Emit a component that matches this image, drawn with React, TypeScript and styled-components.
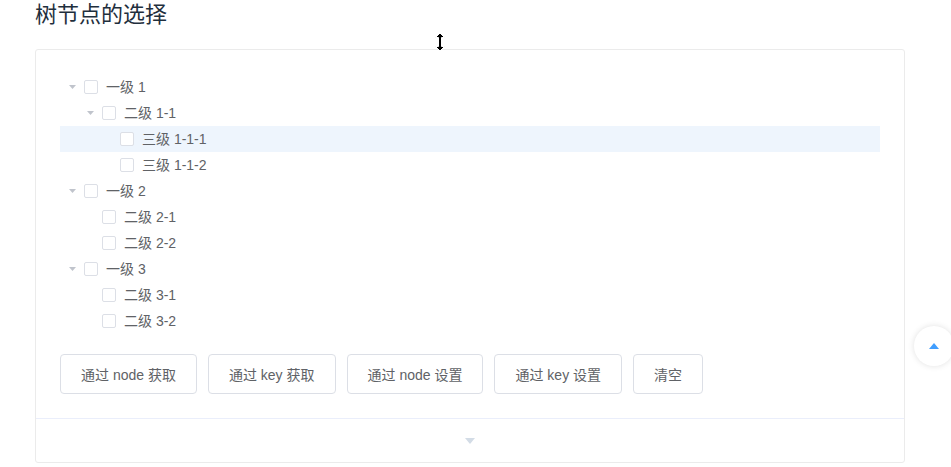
import React from "react";
import styled, { createGlobalStyle } from "styled-components";

const Global = createGlobalStyle`
  html, body { margin: 0; padding: 0; background: #fff; }
  body { font-family: "Liberation Sans", "Noto Sans CJK SC", sans-serif; }
  * { box-sizing: border-box; }
`;

const Page = styled.div`
  width: 951px;
  height: 467px;
  padding-left: 35px;
  position: relative;
  overflow: hidden;
`;

const Title = styled.h3`
  margin: 0 0 19px;
  font-size: 22px;
  line-height: 30px;
  font-weight: 400;
  color: #1f2f3d;
`;

const DemoBlock = styled.div`
  width: 870px;
  border: 1px solid #ebebeb;
  border-radius: 3px;
`;

const Source = styled.div`
  padding: 24px 24px 24px;
`;

const Tree = styled.div`
  display: flex;
  flex-direction: column;
`;

const Row = styled.div<{ $level: number; $active?: boolean }>`
  display: flex;
  align-items: center;
  height: 26px;
  padding-left: ${(p) => (p.$level - 1) * 18}px;
  background: ${(p) => (p.$active ? "#eef5fd" : "transparent")};
`;

const Expand = styled.span<{ $leaf?: boolean }>`
  width: 24px;
  height: 26px;
  display: flex;
  align-items: center;
  justify-content: center;
  visibility: ${(p) => (p.$leaf ? "hidden" : "visible")};
`;

const Check = styled.span`
  width: 14px;
  height: 14px;
  border: 1px solid #dcdfe6;
  border-radius: 2px;
  background: #fff;
  margin-right: 8px;
  flex: none;
`;

const Label = styled.span`
  font-size: 14px;
  line-height: 18px;
  padding-bottom: 1px;
  color: #606266;
`;

const Buttons = styled.div`
  display: flex;
  gap: 11px;
  margin-top: 20px;
`;

const Button = styled.button`
  height: 40px;
  padding: 0 20px;
  border: 1px solid #dcdfe6;
  border-radius: 4px;
  background: #fff;
  color: #606266;
  font-family: inherit;
  font-size: 14px;
  white-space: pre;
  cursor: pointer;
`;

const Control = styled.div`
  height: 44px;
  border-top: 1px solid #eaeefb;
  display: flex;
  align-items: center;
  justify-content: center;
`;

const BackTop = styled.div`
  position: absolute;
  left: 914px;
  top: 326px;
  width: 40px;
  height: 40px;
  border-radius: 50%;
  background: #fff;
  box-shadow: 0 0 6px rgba(0, 0, 0, 0.12);
  display: flex;
  align-items: center;
  justify-content: center;
`;

const Cursor = styled.svg`
  position: absolute;
  left: 434px;
  top: 32px;
`;

const Caret = ({ color, w, h, up }: { color: string; w: number; h: number; up?: boolean }) => (
  <svg width={w} height={h} viewBox={`0 0 ${w} ${h}`}>
    {up ? (
      <polygon points={`0,${h} ${w},${h} ${w / 2},0`} fill={color} />
    ) : (
      <polygon points={`0,0 ${w},0 ${w / 2},${h}`} fill={color} />
    )}
  </svg>
);

type Node = { label: string; level: number; leaf?: boolean; active?: boolean };

const nodes: Node[] = [
  { label: "一级 1", level: 1 },
  { label: "二级 1-1", level: 2 },
  { label: "三级 1-1-1", level: 3, leaf: true, active: true },
  { label: "三级 1-1-2", level: 3, leaf: true },
  { label: "一级 2", level: 1 },
  { label: "二级 2-1", level: 2, leaf: true },
  { label: "二级 2-2", level: 2, leaf: true },
  { label: "一级 3", level: 1 },
  { label: "二级 3-1", level: 2, leaf: true },
  { label: "二级 3-2", level: 2, leaf: true },
];

const buttons = ["通过 node 获取", "通过 key 获取", "通过 node 设置", "通过 key 设置", "清空"];

export default function App() {
  return (
    <>
      <Global />
      <Page>
        <Title>树节点的选择</Title>
        <DemoBlock>
          <Source>
            <Tree>
              {nodes.map((n) => (
                <Row key={n.label} $level={n.level} $active={n.active}>
                  <Expand $leaf={n.leaf}>
                    <Caret color="#c0c4cc" w={7} h={4} />
                  </Expand>
                  <Check />
                  <Label>{n.label}</Label>
                </Row>
              ))}
            </Tree>
            <Buttons>
              {buttons.map((b) => (
                <Button key={b}>{b}</Button>
              ))}
            </Buttons>
          </Source>
          <Control>
            <Caret color="#d3dce6" w={10} h={6} />
          </Control>
        </DemoBlock>
        <BackTop>
          <Caret color="#409eff" w={10} h={6} up />
        </BackTop>
        <Cursor width="12" height="20" viewBox="0 0 12 20">
          <path
            d="M6 1 L10.5 5.5 L7.5 5.5 L7.5 14.5 L10.5 14.5 L6 19 L1.5 14.5 L4.5 14.5 L4.5 5.5 L1.5 5.5 Z"
            fill="#000"
            stroke="#fff"
            strokeWidth="1"
          />
        </Cursor>
      </Page>
    </>
  );
}
